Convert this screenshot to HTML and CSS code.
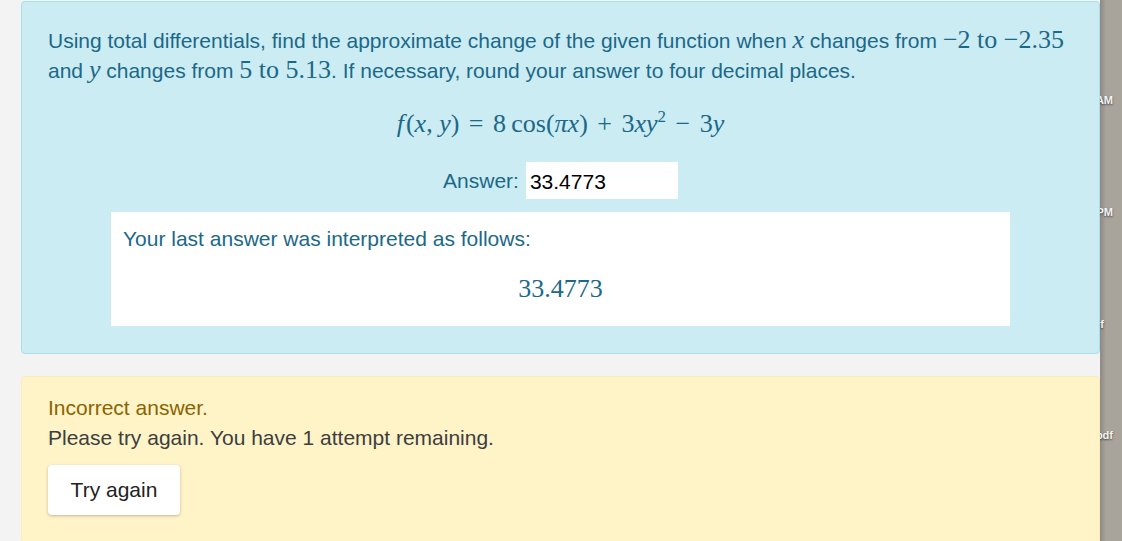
FILE: index.html
```html
<html>
    <head>
        <title>Total Differentials</title>
        <link rel="stylesheet" href="styles.css">
    </head>
    <body>
        <div class="page">
            <div class="card question">
                <p class="prompt">Using total differentials, find the approximate change of the given function when <i class="m">x</i> changes from <span class="m">&minus;2 to &minus;2.35</span><br>and <i class="m">y</i> changes from <span class="m">5 to 5.13</span>. If necessary, round your answer to four decimal places.</p>
                <div class="formula m"><i class="fn">f</i>(<i>x</i>, <i>y</i>) <span class="op">=</span> 8&thinsp;cos(<i>&pi;x</i>) <span class="op">+</span> 3<i>xy</i><sup>2</sup> <span class="op">&minus;</span> 3<i>y</i></div>
                <form class="answer">
                    <label for="answer">Answer:</label>
                    <input type="text" id="answer" value="33.4773">
                </form>
                <div class="interpreted">
                    <p>Your last answer was interpreted as follows:</p>
                    <div class="value m">33.4773</div>
                </div>
            </div>
            <div class="card feedback">
                <p class="wrong">Incorrect answer.</p>
                <p class="retry">Please try again. You have 1 attempt remaining.</p>
                <button class="btn">Try again</button>
            </div>
        </div>
        <div class="desktop">
            <span>11:02 AM</span>
            <span>12:14 PM</span>
            <span class="short">Brief</span>
            <span>hw3.pdf</span>
        </div>
    </body>
</html>
```

FILE: styles.css
```css
body {
    margin: 0;
    display: flex;
    height: 100vh;
    overflow: hidden;
    font-family: "Liberation Sans", Arial, sans-serif;
    font-size: 21px;
    background-color: #f3f3f3;
}
.page {
    width: 1079px;
    padding: 1px 0 0 21px;
    display: flex;
    flex-direction: column;
    gap: 22px;
}
.card {
    border-radius: 4px;
    padding: 24px 26px 27px;
}
.question {
    background-color: #cbecf3;
    border: 1px solid #a9dde8;
    color: #1b6889;
}
p {
    margin: 0;
    line-height: 30px;
}
.m {
    font-family: "Liberation Serif", "Times New Roman", serif;
    font-size: 26px;
}
.prompt .m {
    line-height: 1;
}
i {
    font-style: italic;
}
.formula {
    text-align: center;
    margin: 23px 0 23px;
    line-height: 30px;
}
.formula .fn {
    margin-right: 2px;
}
.formula .op {
    margin: 0 3px;
}
.formula sup {
    font-size: 17px;
    vertical-align: 10px;
    line-height: 0;
}
.answer {
    display: flex;
    justify-content: center;
    align-items: center;
    gap: 7px;
    margin: 0 0 13px;
    line-height: 30px;
}
.answer input {
    width: 152px;
    height: 37px;
    border: none;
    padding: 2px 4px 0;
    font-family: "Liberation Sans", Arial, sans-serif;
    font-size: 21px;
    color: #000;
    background: #fff;
}
.interpreted {
    background: #fff;
    margin: 0 63px;
    padding: 12px 12px 22px;
}
.interpreted .value {
    text-align: center;
    margin-top: 20px;
    line-height: 30px;
}
.feedback {
    flex: 1;
    background-color: #fff3c8;
    border: 1px solid #fcecb4;
    padding-top: 16px;
}
.wrong {
    color: #8a6400;
}
.retry {
    color: #3d3e3e;
}
.btn {
    margin-top: 12px;
    width: 132px;
    height: 50px;
    border: none;
    border-radius: 4px;
    background: #fff;
    box-shadow: 0 1px 3px rgba(0, 0, 0, 0.25);
    font-family: "Liberation Sans", Arial, sans-serif;
    font-size: 21px;
    color: #222;
}
.desktop {
    width: 22px;
    flex-shrink: 0;
    background: linear-gradient(to right, #8e8a83, #a8a49c 6px);
    display: flex;
    flex-direction: column;
    align-items: flex-end;
    padding-top: 94px;
    overflow: hidden;
}
.desktop span {
    white-space: nowrap;
    padding-right: 9px;
    font-family: "Liberation Sans", Arial, sans-serif;
    font-size: 11px;
    font-weight: bold;
    color: #f4f4f4;
    text-shadow: 0 1px 2px rgba(0, 0, 0, 0.6);
    height: 112px;
}
.desktop .short {
    padding-right: 18px;
}
```
